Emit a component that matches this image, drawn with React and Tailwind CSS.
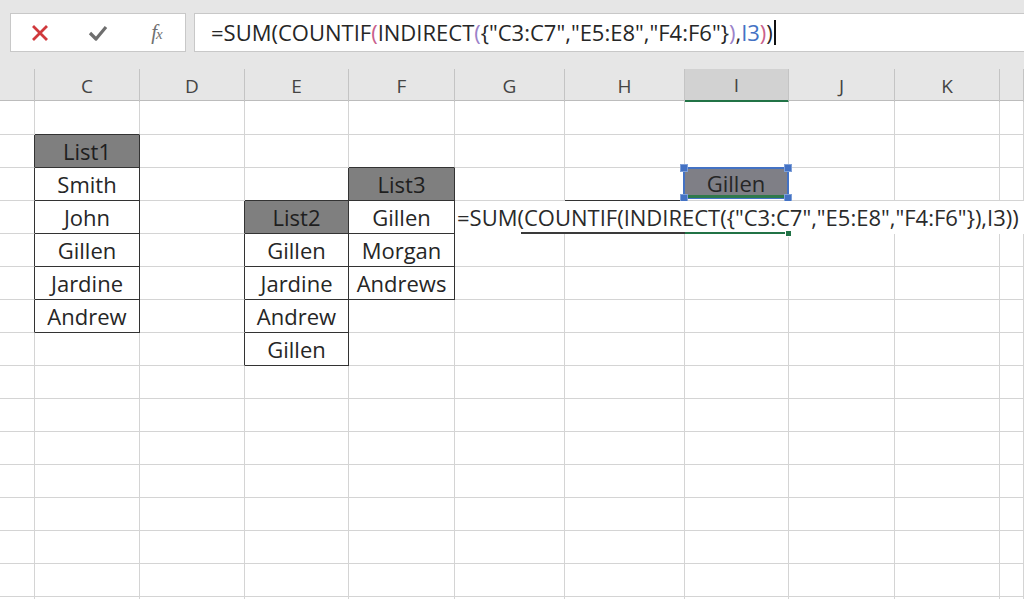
const COLS = [
  { l: "B", w: 35 },
  { l: "C", w: 105 },
  { l: "D", w: 105 },
  { l: "E", w: 104 },
  { l: "F", w: 106 },
  { l: "G", w: 110 },
  { l: "H", w: 120 },
  { l: "I", w: 104 },
  { l: "J", w: 106 },
  { l: "K", w: 105 },
  { l: "L", w: 24 },
];

const cells = {
  C2: "List1",
  C3: "Smith",
  C4: "John",
  C5: "Gillen",
  C6: "Jardine",
  C7: "Andrew",
  E4: "List2",
  E5: "Gillen",
  E6: "Jardine",
  E7: "Andrew",
  E8: "Gillen",
  F3: "List3",
  F4: "Gillen",
  F5: "Morgan",
  F6: "Andrews",
};

const heads = ["C2", "E4", "F3"];
const ROWS = 16;
const grid =
  "grid grid-cols-[35px_105px_105px_104px_106px_110px_120px_104px_106px_105px_1fr]";

const inTable = (ci, r) => {
  const c = COLS[ci];
  return c ? cells[c.l + r] !== undefined : false;
};

function Formula({ colored }) {
  if (!colored) {
    return <span>{'=SUM(COUNTIF(INDIRECT({"C3:C7","E5:E8","F4:F6"}),I3))'}</span>;
  }
  return (
    <span>
      <span>=SUM(COUNTIF</span>
      <span className="text-[#c9608c]">(</span>
      <span>INDIRECT</span>
      <span className="text-[#9b82c9]">(</span>
      <span>{'{"C3:C7","E5:E8","F4:F6"}'}</span>
      <span className="text-[#9b82c9]">)</span>
      <span>,</span>
      <span className="text-[#4472c4]">I3</span>
      <span className="text-[#c9608c]">)</span>
      <span>)</span>
    </span>
  );
}

function FormulaBar() {
  return (
    <div className="h-[69px] bg-[#e6e6e6] flex items-start pt-[13px] pl-[10px] gap-[8px]">
      <div className="w-[176px] h-[39px] bg-white border border-[#c8c8c8] flex items-center">
        <div className="w-[58px] flex justify-center">
          <svg width="16" height="16" viewBox="0 0 16 16">
            <path d="M2 2 L14 14 M14 2 L2 14" stroke="#d0393c" strokeWidth="2.8" strokeLinecap="square" />
          </svg>
        </div>
        <div className="w-[58px] flex justify-center">
          <svg width="20" height="16" viewBox="0 0 20 16">
            <path d="M2 8 L8 14 L18 2" fill="none" stroke="#6e6e6e" strokeWidth="3.2" strokeLinejoin="round" />
          </svg>
        </div>
        <div className="w-[58px] flex justify-center items-baseline font-['Liberation_Serif',serif] italic text-[21px] text-[#707070] leading-none pl-[2px]">
          <span>f</span>
          <span className="text-[15px] -ml-[1px]">x</span>
        </div>
      </div>
      <div className="flex-1 h-[39px] bg-white border border-[#c8c8c8] border-r-0 flex items-center pl-[16px] font-['Open_Sans',sans-serif] text-[22px] text-[#262626] whitespace-nowrap">
        <Formula colored />
        <span className="inline-block w-[2px] h-[25px] bg-[#111] ml-[1px]" />
      </div>
    </div>
  );
}

function Header() {
  return (
    <div className={`${grid} h-[32px] bg-[#e6e6e6] border-b border-[#bcbcbc] font-['Open_Sans',sans-serif] text-[19px] text-[#444]`}>
      {COLS.map((c) =>
        c.l === "I" ? (
          <div key={c.l} className="bg-[#d2d2d2] border-r border-[#c4c4c4] border-b-[3px] border-b-[#217346] flex items-center justify-center pt-[2px]">
            {c.l}
          </div>
        ) : (
          <div key={c.l} className="border-r border-[#c4c4c4] flex items-center justify-center">
            {c.l === "B" || c.l === "L" ? "" : c.l}
          </div>
        )
      )}
    </div>
  );
}

function SelectedCell() {
  return (
    <div className="relative h-[33px] border-r border-b border-[#d4d4d4]">
      <div className="absolute -left-[2px] -top-[1px] -right-[1px] bottom-[1px] border-2 border-[#4472c4] bg-[#7f7f86] flex items-center justify-center text-[#262626] z-10">
        Gillen
        <div className="absolute left-[2px] right-[2px] -bottom-[1px] h-[3px] bg-[#2f7a4c]" />
        <div className="absolute -left-[5px] -top-[5px] w-[8px] h-[8px] bg-[#4472c4] border border-[#7fa0d8]" />
        <div className="absolute -right-[5px] -top-[5px] w-[8px] h-[8px] bg-[#4472c4] border border-[#7fa0d8]" />
        <div className="absolute -left-[5px] -bottom-[5px] w-[8px] h-[8px] bg-[#4472c4] border border-[#7fa0d8]" />
        <div className="absolute -right-[5px] -bottom-[5px] w-[8px] h-[8px] bg-[#4472c4] border border-[#7fa0d8]" />
      </div>
    </div>
  );
}

function EditCell() {
  return (
    <div className="relative h-[33px] col-span-6 bg-white flex items-center pl-[2px] whitespace-nowrap text-[#2a2a2a] z-20">
      <Formula />
      <div className="absolute bottom-0 left-[66px] w-[164px] h-[2px] bg-[#3a3a3a]" />
      <div className="absolute bottom-0 left-[230px] w-[104px] h-[2px] bg-[#217346]" />
      <div className="absolute -bottom-[3px] left-[330px] w-[7px] h-[7px] bg-[#217346] border border-white" />
    </div>
  );
}

function Body() {
  const out = [];
  for (let r = 1; r <= ROWS; r++) {
    for (let ci = 0; ci < COLS.length; ci++) {
      const l = COLS[ci].l;
      const key = l + r;
      if (r === 4 && ci > 5) continue;
      if (r === 4 && l === "G") {
        out.push(<EditCell key={key} />);
        continue;
      }
      if (key === "I3") {
        out.push(<SelectedCell key={key} />);
        continue;
      }
      const darkR = inTable(ci, r) || inTable(ci + 1, r);
      const darkB = inTable(ci, r) || inTable(ci, r + 1) || key === "H3";
      const head = heads.includes(key);
      out.push(
        <div
          key={key}
          className={`h-[33px] border-r border-b flex items-center justify-center pt-[1px] whitespace-nowrap ${
            darkR ? "border-r-[#333]" : "border-r-[#d4d4d4]"
          } ${darkB ? "border-b-[#333]" : "border-b-[#d4d4d4]"} ${
            head ? "bg-[#7f7f7f] text-[#1e1e1e]" : "bg-white text-[#262626]"
          }`}
        >
          {cells[key] || ""}
        </div>
      );
    }
  }
  return (
    <div className="h-[498px] overflow-hidden bg-white pt-[1px]">
      <div className={`${grid} font-['Open_Sans',sans-serif] text-[22px]`}>{out}</div>
    </div>
  );
}

export default function App() {
  return (
    <div className="w-[1024px] h-[600px] overflow-hidden bg-white">
      <FormulaBar />
      <Header />
      <Body />
    </div>
  );
}
